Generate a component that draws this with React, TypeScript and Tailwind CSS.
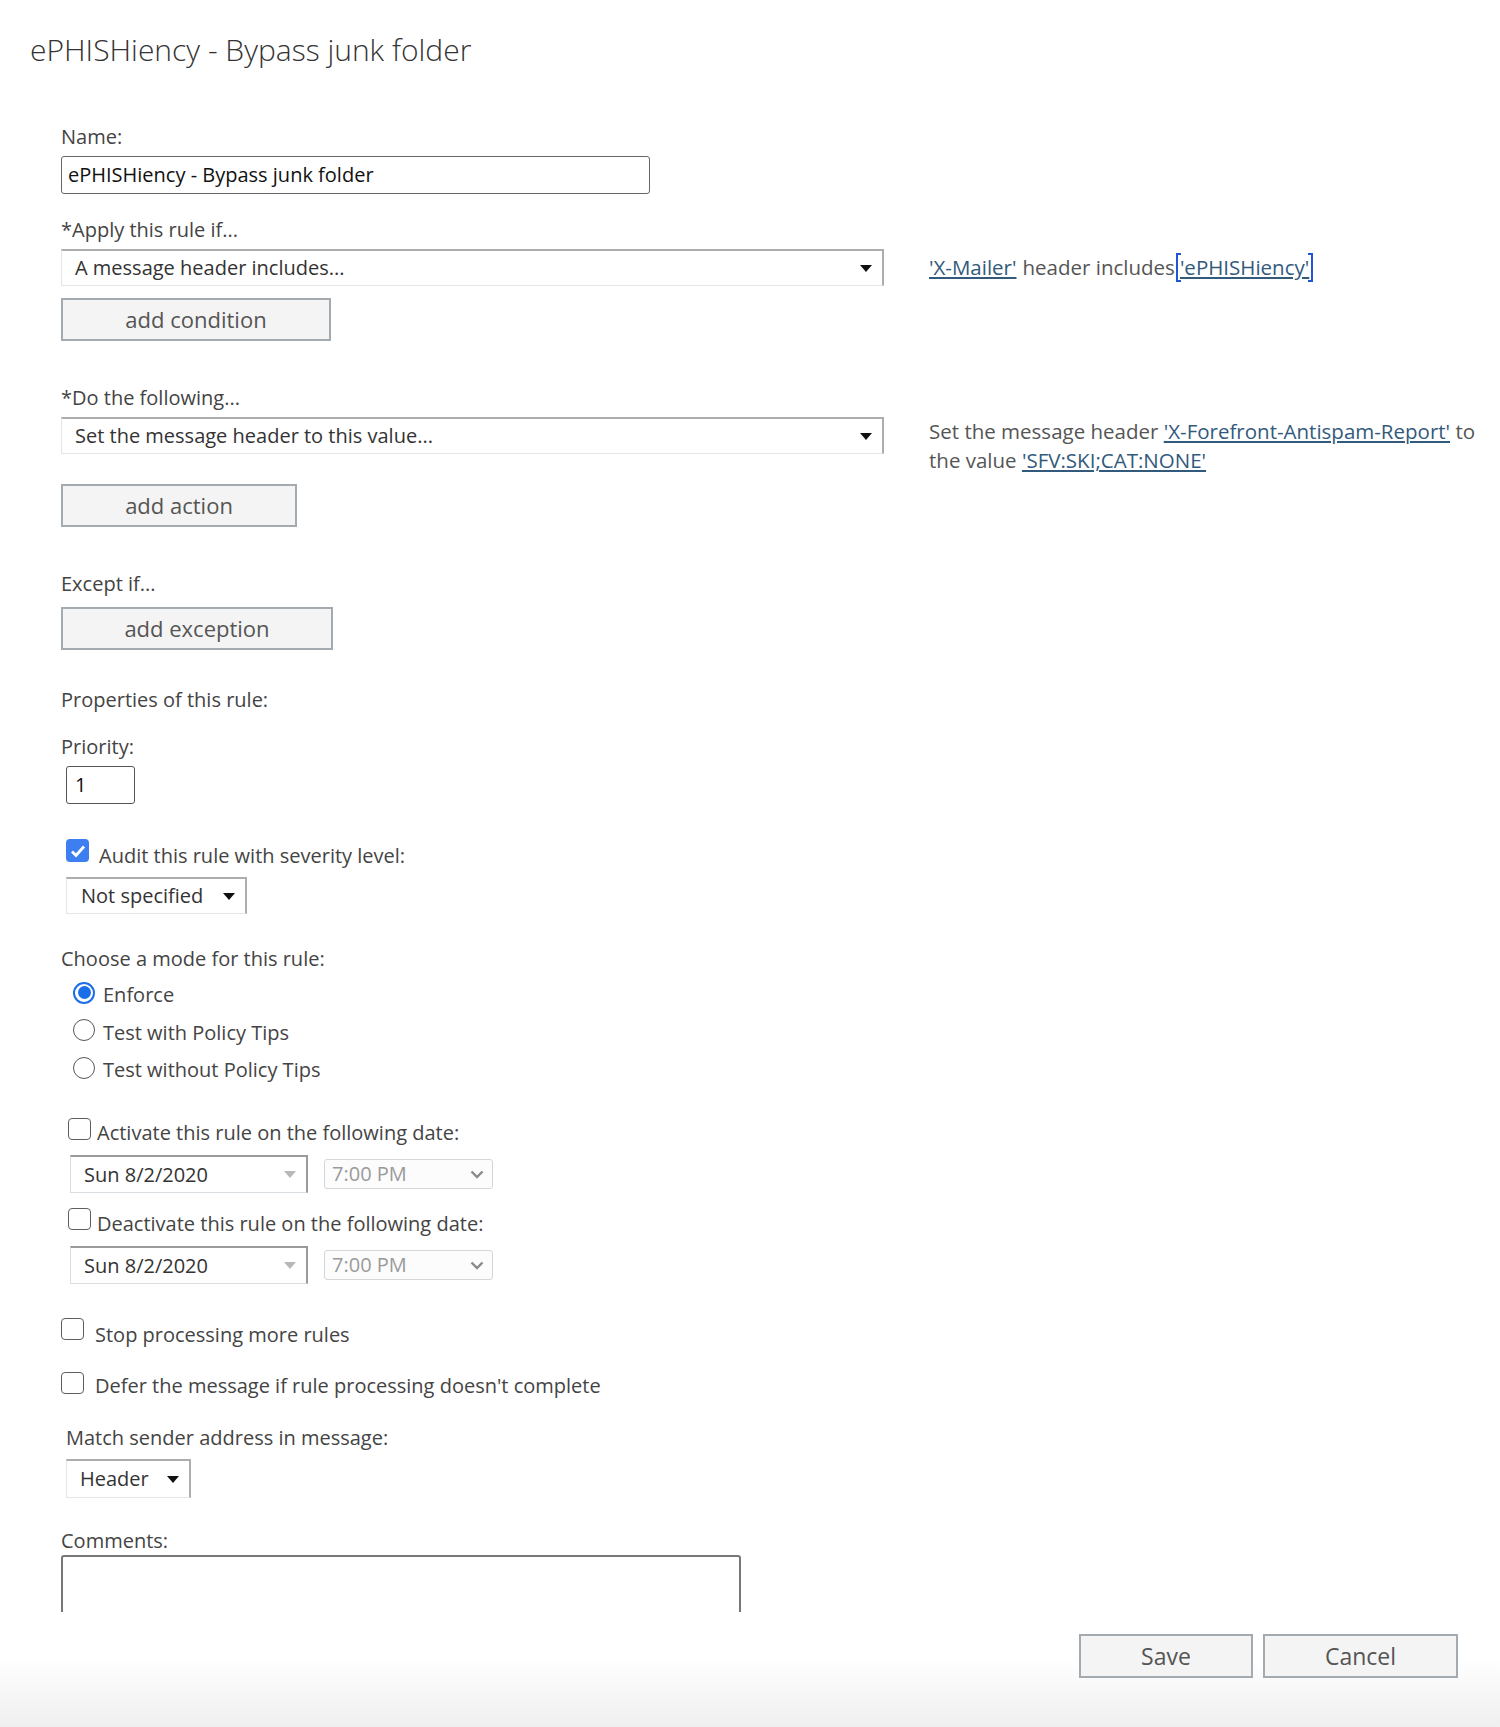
import { ReactNode } from "react";

const font = "font-['Open_Sans',sans-serif]";
const label = "text-[20px] leading-[28px] text-[#444]";

function Caret({ color = "#111" }: { color?: string }) {
  return (
    <svg width="12" height="7" viewBox="0 0 12 7" className="shrink-0">
      <path d="M0 0h12L6 7z" fill={color} />
    </svg>
  );
}

function Chevron() {
  return (
    <svg width="14" height="9" viewBox="0 0 14 9" className="shrink-0">
      <path d="M1.5 1.5 7 7l5.5-5.5" fill="none" stroke="#8a8a8a" strokeWidth="2.4" />
    </svg>
  );
}

// select box with the darker edge on top and right
function Select({ text, className }: { text: string; className: string }) {
  return (
    <div
      className={`flex shrink-0 items-center justify-between border-t-2 border-r-2 border-l border-b border-t-[#adadad] border-r-[#adadad] border-l-[#e2e6ea] border-b-[#e2e6ea] bg-white text-[20px] text-[#333] ${className}`}
    >
      <span>{text}</span>
      <Caret />
    </div>
  );
}

function GrayButton({ children, className }: { children: ReactNode; className: string }) {
  return (
    <button
      className={`flex items-center justify-center border-2 border-[#a3abb0] bg-[#f4f4f4] text-[22px] text-[#555] ${className}`}
    >
      {children}
    </button>
  );
}

function Box({ checked = false }: { checked?: boolean }) {
  if (checked)
    return (
      <span className="flex h-[23px] w-[23px] shrink-0 items-center justify-center rounded-[4px] bg-[#3d7ff0]">
        <svg width="16" height="14" viewBox="0 0 16 14">
          <path d="M2 7.5 6 11.5 14 2.5" fill="none" stroke="#fff" strokeWidth="2.8" />
        </svg>
      </span>
    );
  return <span className="block h-[22px] w-[23px] shrink-0 rounded-[4px] border-[1.5px] border-[#5f5f5f] bg-white" />;
}

function Radio({ on = false }: { on?: boolean }) {
  return on ? (
    <span className="flex h-[22px] w-[22px] shrink-0 items-center justify-center rounded-full border-2 border-[#1a6fe8]">
      <span className="block h-[13px] w-[13px] rounded-full bg-[#1a6fe8]" />
    </span>
  ) : (
    <span className="block h-[22px] w-[22px] shrink-0 rounded-full border-[1.5px] border-[#555]" />
  );
}

function DateRow() {
  return (
    <div className="ml-[70px] flex items-center gap-[16px]">
      <div className="flex h-[38px] w-[238px] items-center justify-between border-t-2 border-r-2 border-l border-b border-t-[#9a9a9a] border-r-[#9a9a9a] border-l-[#d9dee3] border-b-[#d9dee3] pl-[13px] pr-[10px] text-[20px] text-[#333]">
        <span>Sun 8/2/2020</span>
        <Caret color="#b8b8b8" />
      </div>
      <div className="flex h-[30px] w-[169px] items-center justify-between rounded-[3px] border border-[#d6d6d6] bg-[#fcfcfc] pl-[7px] pr-[8px] text-[20px] text-[#9a9a9a]">
        <span>7:00 PM</span>
        <Chevron />
      </div>
    </div>
  );
}

function Link({ children }: { children: ReactNode }) {
  return <span className="text-[#325a7c] underline underline-offset-2">{children}</span>;
}

export default function App() {
  return (
    <div className={`flex h-[1727px] w-[1500px] flex-col bg-white ${font}`}>
      <div className="h-[1612px] overflow-hidden">
        <h1 className="ml-[30px] mt-[30px] text-[30px] font-light leading-[40px] text-[#333]">
          ePHISHiency - Bypass junk folder
        </h1>

        <div className="ml-[61px]">
          <p className={`${label} mt-[53px]`}>Name:</p>
          <div className="mt-[5px] flex h-[38px] w-[589px] items-center rounded-[3px] border-[1.5px] border-[#666] pl-[6px] text-[20px] text-[#111]">
            ePHISHiency - Bypass junk folder
          </div>

          <p className={`${label} mt-[22px]`}>*Apply this rule if...</p>
          <div className="mt-[5px] flex items-center">
            <Select text="A message header includes..." className="h-[37px] w-[823px] pl-[13px] pr-[10px]" />
            <div className="ml-[45px] flex items-center text-[20.5px] text-[#555]">
              <Link>'X-Mailer'</Link>
              <span className="ml-[6px]">header includes</span>
              <span className="relative ml-[1px] inline-block border-2 border-[#1f55d6] px-[2px] leading-[25px]">
                <span className="absolute -top-[2px] -bottom-[2px] left-[3px] right-[3px] border-y-2 border-white" />
                <Link>'ePHISHiency'</Link>
              </span>
            </div>
          </div>
          <GrayButton className="mt-[12px] h-[43px] w-[270px]">add condition</GrayButton>

          <p className={`${label} mt-[43px]`}>*Do the following...</p>
          <div className="mt-[5px] flex h-[37px] items-start overflow-visible">
            <Select text="Set the message header to this value..." className="h-[37px] w-[823px] pl-[13px] pr-[10px]" />
            <p className="ml-[45px] shrink-0 text-[20.5px] leading-[29px] text-[#555]">
              Set the message header <Link>'X-Forefront-Antispam-Report'</Link> to
              <br />
              the value <Link>'SFV:SKI;CAT:NONE'</Link>
            </p>
          </div>
          <GrayButton className="mt-[30px] h-[43px] w-[236px]">add action</GrayButton>

          <p className={`${label} mt-[43px]`}>Except if...</p>
          <GrayButton className="mt-[9px] h-[43px] w-[272px]">add exception</GrayButton>

          <p className={`${label} mt-[36px]`}>Properties of this rule:</p>
          <p className={`${label} mt-[19px]`}>Priority:</p>
          <div className="ml-[5px] mt-[5px] flex h-[38px] w-[69px] items-center rounded-[3px] border-[1.5px] border-[#555] pl-[8px] text-[20px] text-[#111]">
            1
          </div>

          <div className="ml-[5px] mt-[35px] flex items-start gap-[10px]">
            <Box checked />
            <span className={`${label} mt-[3px]`}>Audit this rule with severity level:</span>
          </div>
          <Select text="Not specified" className="ml-[5px] mt-[7px] h-[37px] w-[181px] pl-[14px] pr-[10px]" />

          <p className={`${label} mt-[31px]`}>Choose a mode for this rule:</p>
          <div className="ml-[12px] mt-[8px] flex flex-col gap-[9.5px]">
            {[
              ["Enforce", true],
              ["Test with Policy Tips", false],
              ["Test without Policy Tips", false],
            ].map(([t, on]) => (
              <div key={t as string} className="flex h-[28px] items-center gap-[8px]">
                <span className="-mt-[5px]">
                  <Radio on={on as boolean} />
                </span>
                <span className={label}>{t}</span>
              </div>
            ))}
          </div>

          <div className="ml-[7px] mt-[35px] flex items-start gap-[6px]">
            <span className="-mt-[1px]">
              <Box />
            </span>
            <span className={label}>Activate this rule on the following date:</span>
          </div>
          <div className="-ml-[61px] mt-[8px]">
            <DateRow />
          </div>

          <div className="ml-[7px] mt-[17px] flex items-start gap-[6px]">
            <span className="-mt-[2px]">
              <Box />
            </span>
            <span className={label}>Deactivate this rule on the following date:</span>
          </div>
          <div className="-ml-[61px] mt-[8px]">
            <DateRow />
          </div>

          <div className="mt-[37px] flex items-start gap-[11px]">
            <span className="-mt-[3px]">
              <Box />
            </span>
            <span className={label}>Stop processing more rules</span>
          </div>
          <div className="mt-[23px] flex items-start gap-[11px]">
            <Box />
            <span className={label}>Defer the message if rule processing doesn't complete</span>
          </div>

          <p className={`${label} ml-[5px] mt-[24px]`}>Match sender address in message:</p>
          <Select text="Header" className="ml-[5px] mt-[7px] h-[39px] w-[125px] pl-[13px] pr-[10px]" />

          <p className={`${label} mt-[29px]`}>Comments:</p>
          <div className="h-[100px] w-[680px] rounded-[3px] border-2 border-[#777]" />
        </div>
      </div>

      <div className="flex flex-1 items-start justify-end gap-[10px] bg-gradient-to-b from-white from-40% to-[#efefef] pr-[42px] pt-[22px]">
        <GrayButton className="h-[44px] w-[174px] text-[23px]">Save</GrayButton>
        <GrayButton className="h-[44px] w-[195px] text-[23px]">Cancel</GrayButton>
      </div>
    </div>
  );
}
